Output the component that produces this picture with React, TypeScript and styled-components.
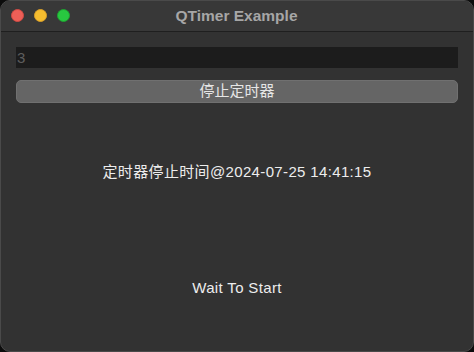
import React from 'react'
import styled, { createGlobalStyle } from 'styled-components'

const Global = createGlobalStyle`
  html, body {
    margin: 0;
    padding: 0;
    background: #0c0c0c;
  }
  body {
    font-family: "Liberation Sans", "Noto Sans CJK SC", sans-serif;
  }
`

const Window = styled.div`
  width: 474px;
  height: 352px;
  box-sizing: border-box;
  border-radius: 10px;
  overflow: hidden;
  background: #323232;
  border: 1px solid #4a4a4a;
  display: flex;
  flex-direction: column;
`

const TitleBar = styled.div`
  height: 30px;
  flex-shrink: 0;
  background: #383838;
  border-bottom: 1px solid #1f1f1f;
  position: relative;
  display: flex;
  align-items: center;
  justify-content: center;
`

const Lights = styled.div`
  position: absolute;
  left: 10px;
  top: 8px;
  display: flex;
  gap: 10px;
`

const Light = styled.span<{ c: string; b: string }>`
  width: 13px;
  height: 13px;
  border-radius: 50%;
  background: ${p => p.c};
  border: 0.5px solid ${p => p.b};
  box-sizing: border-box;
`

const Title = styled.div`
  color: #a6a6a6;
  font-size: 15.5px;
  font-weight: bold;
  padding-right: 1px;
`

const Body = styled.div`
  flex: 1;
  display: flex;
  flex-direction: column;
  padding: 15px 15px 0 15px;
`

const Input = styled.div`
  height: 21px;
  background: #1c1c1c;
  color: #5e5e5e;
  font-size: 15px;
  line-height: 22px;
  padding-left: 1px;
`

const Button = styled.div`
  margin-top: 12px;
  height: 23px;
  box-sizing: border-box;
  background: #656565;
  border: 1px solid #707070;
  border-radius: 5px;
  color: #e6e6e6;
  font-size: 15px;
  line-height: 20px;
  text-align: center;
`

const Label = styled.div<{ top: number }>`
  margin-top: ${p => p.top}px;
  color: #ededed;
  font-size: 15px;
  letter-spacing: 0.35px;
  line-height: 18px;
  text-align: center;
`

export default function App() {
  return (
    <>
      <Global />
      <Window>
        <TitleBar>
          <Lights>
            <Light c="#ed5f57" b="#d24b44" />
            <Light c="#f5bd2f" b="#d9a02a" />
            <Light c="#28c840" b="#1ea331" />
          </Lights>
          <Title>QTimer Example</Title>
        </TitleBar>
        <Body>
          <Input>3</Input>
          <Button>停止定时器</Button>
          <Label top={60}>定时器停止时间@2024-07-25 14:41:15</Label>
          <Label top={98}>Wait To Start</Label>
        </Body>
      </Window>
    </>
  )
}
